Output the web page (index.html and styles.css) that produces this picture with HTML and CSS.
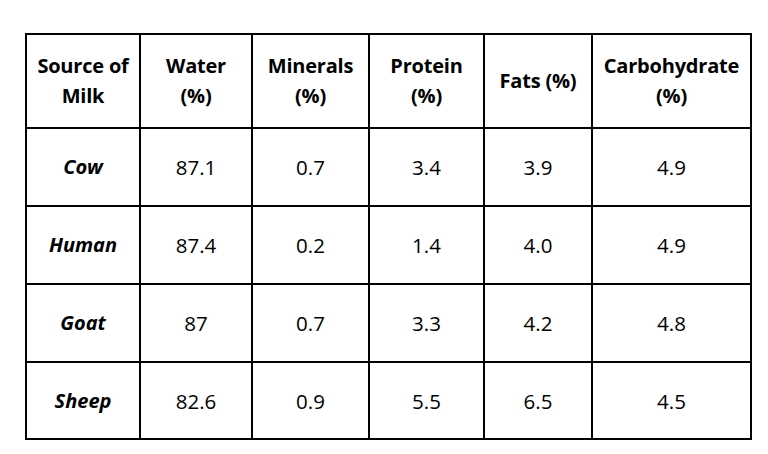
FILE: index.html
```html
<!DOCTYPE html>
<html>
<head>
<meta charset="utf-8">
<link rel="stylesheet" href="styles.css">
</head>
<body>
<table class="milk">
  <colgroup>
    <col class="c1"><col class="c2"><col class="c3"><col class="c4"><col class="c5"><col class="c6">
  </colgroup>
  <thead>
    <tr class="head">
      <th>Source of<br>Milk</th>
      <th>Water<br>(%)</th>
      <th>Minerals<br>(%)</th>
      <th>Protein<br>(%)</th>
      <th>Fats (%)</th>
      <th>Carbohydrate<br>(%)</th>
    </tr>
  </thead>
  <tbody>
    <tr><td class="src">Cow</td><td>87.1</td><td>0.7</td><td>3.4</td><td>3.9</td><td>4.9</td></tr>
    <tr><td class="src">Human</td><td>87.4</td><td>0.2</td><td>1.4</td><td>4.0</td><td>4.9</td></tr>
    <tr><td class="src">Goat</td><td>87</td><td>0.7</td><td>3.3</td><td>4.2</td><td>4.8</td></tr>
    <tr class="last"><td class="src">Sheep</td><td>82.6</td><td>0.9</td><td>5.5</td><td>6.5</td><td>4.5</td></tr>
  </tbody>
</table>
</body>
</html>
```
FILE: styles.css
```css
html, body {
  margin: 0;
  padding: 0;
  background: #ffffff;
}
body {
  padding: 33px 0 0 25px;
  font-family: "Open Sans", "Liberation Sans", sans-serif;
  color: #000;
}
.milk {
  border-collapse: collapse;
  table-layout: fixed;
  width: 725px;
}
.c1 { width: 114px; }
.c2 { width: 112px; }
.c3 { width: 117px; }
.c4 { width: 115px; }
.c5 { width: 108px; }
.c6 { width: 159px; }
.milk th, .milk td {
  border: 2px solid #000;
  text-align: center;
  vertical-align: middle;
  padding: 0;
  font-size: 20px;
  line-height: 30px;
}
.milk th {
  font-weight: 700;
  letter-spacing: -0.2px;
}
.milk td {
  font-size: 20.5px;
}
.head { height: 94px; }
tbody tr { height: 78px; }
tbody tr.last { height: 77px; }
.milk td.src {
  font-weight: 700;
  font-style: italic;
  font-size: 20px;
}
```
